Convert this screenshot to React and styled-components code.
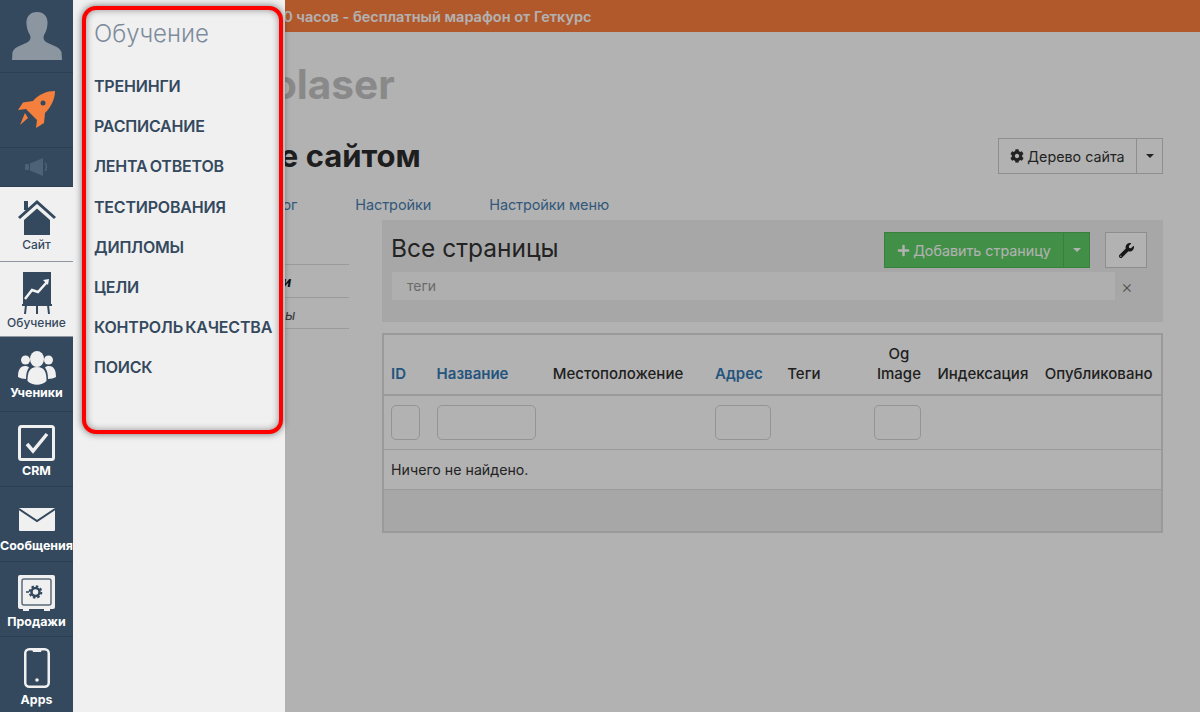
import React from 'react';
import styled, { createGlobalStyle } from 'styled-components';
import { FaCog, FaPlus, FaWrench } from 'react-icons/fa';

const NAVY = '#34495e';
const LIGHT = '#f0f0f0';

const GlobalStyle = createGlobalStyle`
  html, body {
    margin: 0;
    height: 100%;
    overflow: hidden;
    font-family: Inter, "Noto Sans", sans-serif;
    background: #fff;
  }
  * { box-sizing: border-box; }
`;

const Page = styled.div`
  position: relative;
  display: flex;
  width: 1200px;
  height: 712px;
  overflow: hidden;
`;

const Rail = styled.nav`
  flex: 0 0 73px;
  display: flex;
  flex-direction: column;
  background: ${NAVY};
`;

const RailTop = styled.div`
  display: flex;
  align-items: center;
  justify-content: center;
  height: ${(p) => p.$h}px;
  border-bottom: 1px solid #2c3f52;
`;

const RailItem = styled.a`
  height: 75px;
  display: flex;
  flex-direction: column;
  align-items: center;
  padding-top: ${(p) => p.$top}px;
  gap: ${(p) => p.$gap}px;
  font-size: ${(p) => (p.$active ? 12 : 12.4)}px;
  font-weight: ${(p) => (p.$active ? 500 : 700)};
  line-height: 14px;
  white-space: nowrap;
  color: ${(p) => (p.$active ? NAVY : '#fff')};
  background: ${(p) => (p.$active ? LIGHT : NAVY)};
  border-bottom: 1px solid ${(p) => (p.$active ? '#8e979f' : '#2c3f52')};
  &:last-child { border-bottom: 0; }
`;

const Main = styled.main`
  position: relative;
  flex: 1;
  min-width: 0;
  background: #fff;
`;

const Shade = styled.div`
  position: absolute;
  inset: 0;
  background: rgba(0, 0, 0, 0.3);
  z-index: 2;
`;

const Banner = styled.div`
  height: 32px;
  display: flex;
  align-items: center;
  padding-left: 204px;
  background: #ff8040;
  color: #fff;
  font-size: 14.5px;
  font-weight: 600;
`;

const Content = styled.div`
  padding: 0 37px 0 27px;
`;

const Logo = styled.div`
  height: 76px;
  padding: 28px 0 0 172px;
  font-size: 40.5px;
  line-height: 50px;
  font-weight: 700;
  color: #c4c4c4;
`;

const TitleRow = styled.div`
  height: 82px;
  display: flex;
  justify-content: space-between;
  padding-top: 30px;
`;

const Title = styled.h1`
  margin: 0;
  padding-left: 9px;
  font-size: 31px;
  line-height: 36px;
  font-weight: 700;
  color: #2b2b2b;
`;

const ButtonGroup = styled.div`
  display: flex;
  height: 36px;
`;

const Button = styled.button`
  display: flex;
  align-items: center;
  justify-content: center;
  gap: 3px;
  height: 36px;
  width: ${(p) => p.$w}px;
  padding: 0;
  margin-left: ${(p) => (p.$join ? -1 : 0)}px;
  font-family: inherit;
  font-size: 14.3px;
  color: ${(p) => (p.$green ? '#fff' : '#333')};
  background: ${(p) => (p.$green ? '#5fce68' : '#fff')};
  border: 1px solid ${(p) => (p.$green ? '#52b85a' : '#ccc')};
`;

const Caret = styled.span`
  width: 0;
  height: 0;
  border-left: 4px solid transparent;
  border-right: 4px solid transparent;
  border-top: 4px solid currentColor;
`;

const Tabs = styled.div`
  height: 30px;
  display: flex;
  gap: 58px;
  padding-left: 165px;
  font-size: 14.5px;
  letter-spacing: -0.1px;
  line-height: 29px;
  color: #4a7fb0;
`;

const Body = styled.div`
  display: grid;
  grid-template-columns: 249px 781px;
  gap: 33px;
`;

const SideList = styled.ul`
  list-style: none;
  margin: 44px 0 0;
  padding: 0;
`;

const SideItem = styled.li`
  height: 32.5px;
  padding: 0 0 0 ${(p) => p.$pad}px;
  border-top: 1px solid #ddd;
  font-size: 14px;
  line-height: 33px;
  font-style: italic;
  font-weight: ${(p) => (p.$current ? 700 : 400)};
  color: ${(p) => (p.$current ? '#111' : '#555')};
  &:last-child { border-bottom: 1px solid #ddd; }
`;

const FilterBox = styled.section`
  height: 102px;
  padding: 12px 16px 0 10px;
  background: #f0f0f0;
`;

const FilterHead = styled.div`
  display: flex;
  align-items: center;
  justify-content: space-between;
  height: 36px;
`;

const FilterHeading = styled.h2`
  margin: 0 0 4px -1px;
  font-size: 24.5px;
  font-weight: 400;
  color: #333;
`;

const FilterActions = styled.div`
  display: flex;
  gap: 15px;
`;

const TagRow = styled.div`
  display: flex;
  align-items: center;
  margin-top: 4px;
  gap: 6px;
  color: #777;
  font-size: 18px;
  font-weight: 300;
`;

const TagInput = styled.div`
  width: 723px;
  height: 28px;
  padding-left: 15px;
  background: #fbfbfb;
  color: #999;
  font-size: 14px;
  font-weight: 400;
  line-height: 28px;
`;

const Table = styled.table`
  width: 781px;
  margin-top: 11px;
  table-layout: fixed;
  border-collapse: collapse;
  border: 2px solid #ddd;
  color: #333;
  font-size: 15px;
`;

const HeadCell = styled.th`
  height: 61px;
  padding: 0 0 10px ${(p) => (p.$center ? 0 : 7)}px;
  vertical-align: bottom;
  text-align: ${(p) => (p.$center ? 'center' : 'left')};
  font-size: 15px;
  font-weight: ${(p) => (p.$sort ? 600 : 500)};
  line-height: 20px;
  color: ${(p) => (p.$sort ? '#3479b5' : '#2f2f2f')};
  border-bottom: 2px solid #ddd;
`;

const FilterCell = styled.td`
  height: 54px;
  padding: 0 0 0 7px;
  border-bottom: 1px solid #ddd;
`;

const CellInput = styled.div`
  width: ${(p) => p.$w}px;
  height: 35px;
  border: 1.5px solid #d4d4d4;
  border-radius: 5px;
`;

const EmptyCell = styled.td`
  height: 40px;
  padding: 0 7px;
  font-size: 14.2px;
  border-bottom: 1px solid #ddd;
`;

const TableFoot = styled.td`
  height: 43px;
  background: #f0f0f0;
`;

const Drawer = styled.aside`
  position: absolute;
  top: 0;
  left: 73px;
  bottom: 0;
  width: 212px;
  padding: 6px 2px 0 9px;
  background: ${LIGHT};
  z-index: 3;
`;

const Highlight = styled.div`
  height: 428px;
  padding: 10px 0 0 8px;
  border: 4px solid #f00;
  border-radius: 14px;
  box-shadow: 0 0 7px rgba(0, 0, 0, 0.55), inset 0 0 7px rgba(0, 0, 0, 0.4);
  background: ${LIGHT};
`;

const DrawerTitle = styled.div`
  font-size: 24px;
  line-height: 28px;
  font-weight: 300;
  color: #7d8b9c;
  margin-bottom: 18px;
`;

const DrawerLink = styled.a`
  display: block;
  height: 40.2px;
  font-size: 16px;
  line-height: 40px;
  font-weight: 600;
  letter-spacing: -0.2px;
  word-spacing: -1.5px;
  white-space: nowrap;
  color: #34495e;
`;

const Avatar = () => (
  <svg width="50" height="48" viewBox="0 0 50 48">
    <path fill="#8c96a1" d="M25 0C17 0 14 6 14.5 12c.5 5 1.5 8 3.5 11 1 3 .5 5-2 7-5 3-13 4-15.5 10L0 48h50l-.5-8c-2.5-6-10.5-7-15.5-10-2.5-2-3-4-2-7 2-3 3-6 3.5-11C36 6 33 0 25 0z" />
  </svg>
);

const Rocket = () => (
  <svg width="38" height="38" viewBox="0 0 38 38" fill="#f5803e">
    <path d="M37 0C29 0 21 3 15 10L5 11.5 0 19l8-1 11 11-1 8 8-5 1-10C33 16 37 8 37 0z" />
    <path d="M2 34l8-7-3-5z" />
    <circle cx="25" cy="12" r="2.5" fill={NAVY} />
  </svg>
);

const Speaker = () => (
  <svg width="24" height="18" viewBox="0 0 24 18" fill="#4e6277">
    <rect x="0" y="6" width="4" height="6" rx="1" />
    <path d="M5 5.5 18 0v18L5 12.5z" />
    <path d="M20 5c2 2 2 6 0 8" fill="none" stroke="#4e6277" strokeWidth="1.5" />
  </svg>
);

const HomeIcon = () => (
  <svg width="38" height="37" viewBox="0 0 38 37" fill={NAVY}>
    <rect x="6" y="2" width="4" height="9" />
    <path d="M1 19 19 3l18 16" fill="none" stroke={NAVY} strokeWidth="3" />
    <path d="M6 21 19 9.5 32 21v15H6z" />
  </svg>
);

const ChartIcon = () => (
  <svg width="30" height="42" viewBox="0 0 30 42">
    <rect x="1" y="0" width="28" height="32" fill={NAVY} />
    <path d="M3 27l7-9 6 2 9-10" fill="none" stroke="#f4f4f4" strokeWidth="2.5" />
    <path d="M21 8l6-1-1 6z" fill="#f4f4f4" />
    <path d="M0 33h30M4 33l-1 9M15 33v9M26 33l1 9" stroke={NAVY} strokeWidth="2" fill="none" />
  </svg>
);

const UsersIcon = () => (
  <svg width="38" height="34" viewBox="0 0 38 34" fill={LIGHT}>
    <circle cx="7.5" cy="9" r="4.5" />
    <circle cx="30.5" cy="9" r="4.5" />
    <path d="M0 26c0-7 2-11 7-11 2 0 3 .5 4 1.5C9 19 8 23 8 28c-3 0-6-1-8-2z" />
    <path d="M38 26c0-7-2-11-7-11-2 0-3 .5-4 1.5 2 2.5 3 6.5 3 11.5 3 0 6-1 8-2z" />
    <ellipse cx="19" cy="8" rx="7" ry="8" />
    <path d="M9.5 30c0-9 2-14 9.5-14s9.5 5 9.5 14c-5 5-14 5-19 0z" />
  </svg>
);

const CrmIcon = () => (
  <svg width="37" height="36" viewBox="0 0 37 36">
    <rect x="1.5" y="1.5" width="34" height="33" rx="2" fill="none" stroke={LIGHT} strokeWidth="3" />
    <path d="M9 19l6 7L29 9" fill="none" stroke={LIGHT} strokeWidth="3.5" />
  </svg>
);

const MailIcon = () => (
  <svg width="36" height="23" viewBox="0 0 36 23">
    <rect width="36" height="23" rx="1" fill={LIGHT} />
    <path d="M0 1l18 12L36 1" fill="none" stroke={NAVY} strokeWidth="2" />
  </svg>
);

const SafeIcon = () => (
  <svg width="37" height="36" viewBox="0 0 37 36">
    <rect x="0" y="0" width="37" height="34" rx="2" fill={LIGHT} />
    <rect x="4" y="4" width="29" height="26" rx="2" fill={LIGHT} stroke="#5a6a7a" strokeWidth="1.5" />
    <circle cx="17.5" cy="17" r="4" fill="none" stroke={NAVY} strokeWidth="2.5" />
    <circle cx="17.5" cy="17" r="5.8" fill="none" stroke={NAVY} strokeWidth="2" strokeDasharray="2.5 2" />
    <path d="M8 17h3" fill="none" stroke={NAVY} strokeWidth="1.5" />
    <rect x="5" y="34" width="6" height="2" fill={LIGHT} />
    <rect x="26" y="34" width="6" height="2" fill={LIGHT} />
  </svg>
);

const PhoneIcon = () => (
  <svg width="26" height="40" viewBox="0 0 26 40">
    <rect x="1.25" y="1.25" width="23.5" height="37.5" rx="4" fill="none" stroke={LIGHT} strokeWidth="2.5" />
    <path d="M8 1h10l-1 3H9z" fill={LIGHT} />
    <circle cx="13" cy="32" r="1.8" fill={LIGHT} />
  </svg>
);

const railItems = [
  { label: 'Сайт', Icon: HomeIcon, top: 12, gap: 2, active: true },
  { label: 'Обучение', Icon: ChartIcon, top: 10, gap: 2, active: true },
  { label: 'Ученики', Icon: UsersIcon, top: 14, gap: 1 },
  { label: 'CRM', Icon: CrmIcon, top: 13, gap: 3 },
  { label: 'Сообщения', Icon: MailIcon, top: 21, gap: 8 },
  { label: 'Продажи', Icon: SafeIcon, top: 13, gap: 4 },
  { label: 'Apps', Icon: PhoneIcon, top: 11, gap: 5 },
];

const drawerLinks = [
  'Тренинги',
  'Расписание',
  'Лента ответов',
  'Тестирования',
  'Дипломы',
  'Цели',
  'Контроль качества',
  'Поиск',
];

const columns = [
  { title: 'ID', w: 46.5, sort: true, input: 29 },
  { title: 'Название', w: 116, sort: true, input: 99 },
  { title: 'Местоположение', w: 162 },
  { title: 'Адрес', w: 72, sort: true, input: 56 },
  { title: 'Теги', w: 87 },
  { title: 'Og Image', w: 63, center: true, input: 47 },
  { title: 'Индексация', w: 107 },
  { title: 'Опубликовано', w: 124 },
];

export default function App() {
  return (
    <Page>
      <GlobalStyle />
      <Rail>
        <RailTop $h={73}><Avatar /></RailTop>
        <RailTop $h={75}><Rocket /></RailTop>
        <RailTop $h={39}><Speaker /></RailTop>
        {railItems.map(({ label, Icon, top, gap, active }) => (
          <RailItem key={label} $top={top} $gap={gap} $active={active}>
            <Icon />
            <span>{label}</span>
          </RailItem>
        ))}
      </Rail>

      <Drawer>
        <Highlight>
          <DrawerTitle>Обучение</DrawerTitle>
          {drawerLinks.map((link) => (
            <DrawerLink key={link}>{link.toUpperCase()}</DrawerLink>
          ))}
        </Highlight>
      </Drawer>

      <Main>
        <Banner>10 часов - бесплатный марафон от Геткурс</Banner>
        <Content>
          <Logo>olaser</Logo>
          <TitleRow>
            <Title>Управление сайтом</Title>
            <ButtonGroup>
              <Button $w={139}><FaCog size={14} /> Дерево сайта</Button>
              <Button $w={27} $join><Caret /></Button>
            </ButtonGroup>
          </TitleRow>
          <Tabs>
            <span>Блог</span>
            <span>Настройки</span>
            <span>Настройки меню</span>
          </Tabs>
          <Body>
            <SideList>
              <SideItem $current $pad={139}>Записи</SideItem>
              <SideItem $pad={130}>Шаблоны</SideItem>
            </SideList>
            <div>
              <FilterBox>
                <FilterHead>
                  <FilterHeading>Все страницы</FilterHeading>
                  <FilterActions>
                    <ButtonGroup>
                      <Button $w={180} $green><FaPlus size={13} /> Добавить страницу</Button>
                      <Button $w={27} $green $join><Caret /></Button>
                    </ButtonGroup>
                    <Button $w={42}><FaWrench size={15} color="#222" /></Button>
                  </FilterActions>
                </FilterHead>
                <TagRow>
                  <TagInput>теги</TagInput>
                  <span>×</span>
                </TagRow>
              </FilterBox>
              <Table>
                <colgroup>
                  {columns.map((col) => <col key={col.title} width={col.w} />)}
                </colgroup>
                <thead>
                  <tr>
                    {columns.map((col) => (
                      <HeadCell key={col.title} $sort={col.sort} $center={col.center}>{col.title}</HeadCell>
                    ))}
                  </tr>
                </thead>
                <tbody>
                  <tr>
                    {columns.map((col) => (
                      <FilterCell key={col.title}>
                        {col.input && <CellInput $w={col.input} />}
                      </FilterCell>
                    ))}
                  </tr>
                  <tr>
                    <EmptyCell colSpan={8}>Ничего не найдено.</EmptyCell>
                  </tr>
                  <tr>
                    <TableFoot colSpan={8} />
                  </tr>
                </tbody>
              </Table>
            </div>
          </Body>
        </Content>
        <Shade />
      </Main>
    </Page>
  );
}
